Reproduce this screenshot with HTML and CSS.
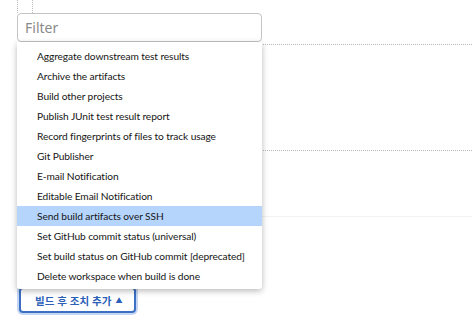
FILE: index.html
```html
<!DOCTYPE html>
<html lang="ko">
<head>
<meta charset="utf-8">
<title>Post-build actions</title>
<link rel="stylesheet" href="styles.css">
</head>
<body>
<div class="page">
  <div class="stub"></div>
  <div class="filter-wrap">
    <input class="filter" type="text" placeholder="Filter">
    <ul class="menu">
      <li>Aggregate downstream test results</li>
      <li>Archive the artifacts</li>
      <li>Build other projects</li>
      <li>Publish JUnit test result report</li>
      <li>Record fingerprints of files to track usage</li>
      <li>Git Publisher</li>
      <li>E-mail Notification</li>
      <li>Editable Email Notification</li>
      <li class="active">Send build artifacts over SSH</li>
      <li>Set GitHub commit status (universal)</li>
      <li>Set build status on GitHub commit [deprecated]</li>
      <li>Delete workspace when build is done</li>
    </ul>
  </div>
  <div class="section first"></div>
  <div class="section second"></div>
  <div class="section third"></div>
  <button class="add-btn" type="button">빌드 후 조치 추가 <span class="caret">▲</span></button>
</div>
</body>
</html>
```
FILE: styles.css
```css
html, body {
  margin: 0;
  padding: 0;
  background: #fff;
}
body {
  font-family: "Noto Sans", "Noto Sans CJK KR", sans-serif;
  color: #222;
  width: 474px;
  height: 327px;
  overflow: hidden;
}
.page {
  position: relative;
  padding-left: 17px;
  padding-right: 2px;
}
.stub {
  width: 14px;
  height: 13px;
  border-left: 1px dotted #bbb;
  border-right: 1px dotted #bbb;
}
.filter-wrap {
  position: relative;
  width: 245px;
  z-index: 2;
}
.filter {
  display: block;
  box-sizing: border-box;
  width: 245px;
  height: 29px;
  margin: 0;
  border: 1px solid #c4c4c4;
  border-radius: 4px;
  padding: 0 7px;
  font-family: "Noto Sans", sans-serif;
  font-size: 14px;
  color: #333;
  background: #fff;
  outline: none;
}
.filter::placeholder {
  color: #8a8a8a;
}
.menu {
  position: absolute;
  top: 29px;
  left: 0;
  width: 245px;
  box-sizing: border-box;
  margin: 0;
  padding: 4px 0 3px;
  list-style: none;
  background: #fff;
  box-shadow: 0 2px 6px rgba(0, 0, 0, 0.28);
  border-radius: 0 0 3px 3px;
}
.menu li {
  height: 20px;
  line-height: 20px;
  padding-left: 20px;
  font-family: Lato, "Noto Sans", sans-serif;
  font-size: 10.2px;
  letter-spacing: -0.1px;
  color: #161616;
  white-space: nowrap;
}
.menu li.active {
  background: #b5d5fd;
}
.section {
  border-top: 1px dotted #b8b8b8;
}
.first {
  margin-top: 2px;
  height: 105px;
}
.second {
  height: 65px;
}
.third {
  border-top: 1px solid #f2f2f2;
  height: 70px;
}
.add-btn {
  display: flex;
  align-items: center;
  gap: 4px;
  box-sizing: border-box;
  height: 26px;
  margin-left: 2px;
  padding: 0 12px 0 14px;
  border: 2px solid #3d6fc2;
  border-radius: 4px;
  box-shadow: 0 0 0 2px #c4d6f3;
  background: #fff;
  color: #2c5fb7;
  font-family: "Noto Sans CJK KR", sans-serif;
  font-weight: 700;
  font-size: 10.5px;
}
.caret {
  font-size: 7px;
}
```
